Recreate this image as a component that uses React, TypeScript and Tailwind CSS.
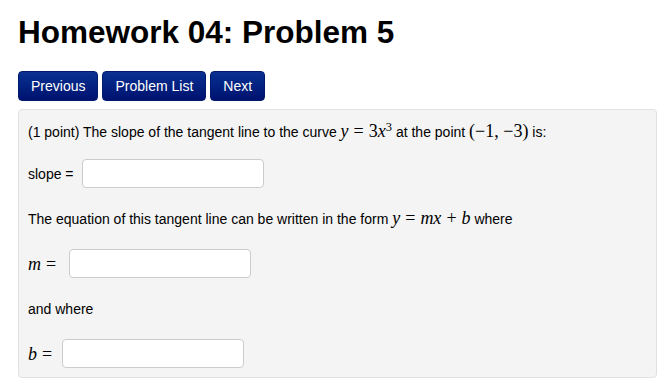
import React from 'react';

const mathFont = { fontFamily: '"Liberation Serif", "DejaVu Serif", serif' };

// MathJax-ish inline math pieces
const V = ({ children }: { children: React.ReactNode }) => (
  <i className="text-[18px] leading-5" style={mathFont}>{children}</i>
);
const N = ({ children }: { children: React.ReactNode }) => (
  <span className="text-[18px] leading-5" style={mathFont}>{children}</span>
);
const Op = ({ children }: { children: React.ReactNode }) => (
  <span className="mx-[5px] text-[18px] leading-5" style={mathFont}>{children}</span>
);

const AnswerBox = ({ className = '' }: { className?: string }) => (
  <input
    type="text"
    className={`h-[29px] w-[182px] rounded-[4px] border border-[#cccccc] bg-white px-2 text-sm outline-none ${className}`}
  />
);

const navButtons = ['Previous', 'Problem List', 'Next'];

const App: React.FC = () => {
  return (
    <div
      className="min-h-screen bg-white pl-[18px] pr-px text-black"
      style={{ fontFamily: '"Liberation Sans", Arial, sans-serif' }}
    >
      {/* 제목 */}
      <h1 className="pt-[14px] text-[31.5px] font-bold leading-[36px]">Homework 04: Problem 5</h1>

      {/* 이동 버튼 */}
      <div className="mt-[21px] flex gap-1">
        {navButtons.map((label) => (
          <button
            key={label}
            className="rounded-[4px] border border-[#001a6e] bg-gradient-to-b from-[#0a3092] to-[#00116f] px-3 py-1 text-sm leading-5 text-white"
          >
            {label}
          </button>
        ))}
      </div>

      {/* 문제 본문 */}
      <div className="mt-2 rounded-[4px] border border-[#e1e1e1] bg-[#f4f4f4] pb-[9px] pl-[9px] pt-[11px] text-sm">
        <p className="h-5 leading-5">
          (1 point) The slope of the tangent line to the curve <V>y</V>
          <Op>=</Op>
          <N>3</N>
          <V>x</V>
          <sup className="text-[12.5px]" style={mathFont}>3</sup> at the point <N>(−1,</N>
          <N> −3)</N> is:
        </p>

        <div className="mt-[18px] flex items-center">
          <span>slope =</span>
          <AnswerBox className="ml-[8px]" />
        </div>

        <p className="mt-5 h-5 leading-5">
          The equation of this tangent line can be written in the form <V>y</V>
          <Op>=</Op>
          <V>mx</V>
          <Op>+</Op>
          <V>b</V> where
        </p>

        <div className="mt-[21px] flex items-center">
          <V>m</V>
          <Op>=</Op>
          <AnswerBox className="ml-[8px]" />
        </div>

        <p className="mt-[21px] h-5 leading-5">and where</p>

        <div className="mt-5 flex items-center">
          <V>b</V>
          <Op>=</Op>
          <AnswerBox className="ml-[5px]" />
        </div>
      </div>
    </div>
  );
};

export default App;
